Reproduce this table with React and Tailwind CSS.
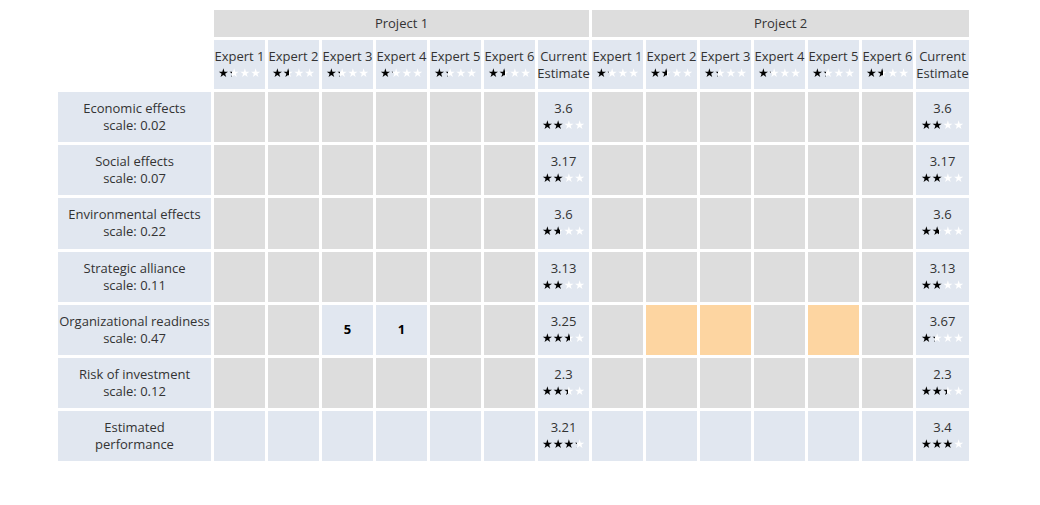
import React from 'react';

const experts = ['Expert 1', 'Expert 2', 'Expert 3', 'Expert 4', 'Expert 5', 'Expert 6'];

// header star ratings per expert
const headerStars = [
  [1.3, 1.6, 1.3, 1.2, 1.3, 1.6],
  [1.2, 1.6, 1.3, 1.2, 1.3, 1.6],
];

// g = gray, b = blue, o = orange
const rows = [
  { label: 'Economic effects', scale: '0.02', p1: ['g','g','g','g','g','g'], p2: ['g','g','g','g','g','g'], est: [['3.6', 2.0], ['3.6', 1.95]] },
  { label: 'Social effects', scale: '0.07', p1: ['g','g','g','g','g','g'], p2: ['g','g','g','g','g','g'], est: [['3.17', 2.0], ['3.17', 2.0]] },
  { label: 'Environmental effects', scale: '0.22', p1: ['g','g','g','g','g','g'], p2: ['g','g','g','g','g','g'], est: [['3.6', 1.7], ['3.6', 1.7]] },
  { label: 'Strategic alliance', scale: '0.11', p1: ['g','g','g','g','g','g'], p2: ['g','g','g','g','g','g'], est: [['3.13', 2.0], ['3.13', 2.0]] },
  { label: 'Organizational readiness', scale: '0.47', p1: ['g','g','b','b','g','g'], p2: ['g','o','o','g','o','g'], vals: { 2: '5', 3: '1' }, est: [['3.25', 2.6], ['3.67', 1.3]] },
  { label: 'Risk of investment', scale: '0.12', p1: ['g','g','g','g','g','g'], p2: ['g','g','g','g','g','g'], est: [['2.3', 2.4], ['2.3', 2.4]] },
  { label: 'Estimated performance', p1: ['b','b','b','b','b','b'], p2: ['b','b','b','b','b','b'], est: [['3.21', 3.25], ['3.4', 3.0]] },
];

const bg = {
  g: 'bg-[#dddddd]',
  b: 'bg-[#e1e7f0]',
  o: 'bg-[#fdd5a1]',
};

// partial fill done with a gradient clipped to the glyphs
const Stars = ({ value }) => {
  const pct = (value / 4) * 100;
  return (
    <span
      className="inline-block whitespace-nowrap text-[12px] leading-[17px] font-['DejaVu_Sans',sans-serif] bg-clip-text text-transparent"
      style={{ backgroundImage: `linear-gradient(to right, #000 ${pct}%, #fff ${pct}%)` }}
    >
      ★★★★
    </span>
  );
};

const EstimateCell = ({ value, stars }) => (
  <div className="bg-[#e1e7f0] flex flex-col items-center justify-center leading-[17px]">
    <span>{value}</span>
    <Stars value={stars} />
  </div>
);

const App = () => {
  return (
    <div className="w-[1040px] h-[505px] bg-white font-['Open_Sans',sans-serif] text-[13px] text-[#333333] pt-[10px] pl-[58px]">
      <div className="grid grid-cols-[153px_repeat(6,51px)_51px_repeat(6,51px)_53px] grid-rows-[27px_49px_repeat(7,50.2px)] gap-[3px]">
        {/* top header row */}
        <div />
        <div className="col-span-7 bg-[#dddddd] flex items-center justify-center">Project 1</div>
        <div className="col-span-7 bg-[#dddddd] flex items-center justify-center">Project 2</div>

        {/* expert header row */}
        <div />
        {[0, 1].map((p) => (
          <React.Fragment key={p}>
            {experts.map((e, i) => (
              <div key={e} className="bg-[#e1e7f0] flex flex-col items-center justify-center leading-[17px] whitespace-nowrap">
                <span>{e}</span>
                <Stars value={headerStars[p][i]} />
              </div>
            ))}
            <div className="bg-[#e1e7f0] flex flex-col items-center justify-center leading-[17px] whitespace-nowrap">
              <span>Current</span>
              <span>Estimate</span>
            </div>
          </React.Fragment>
        ))}

        {/* criteria rows */}
        {rows.map((r) => (
          <React.Fragment key={r.label}>
            <div className="bg-[#e1e7f0] flex flex-col items-center justify-center leading-[17px] text-center whitespace-nowrap">
              {r.scale ? (
                <>
                  <span>{r.label}</span>
                  <span>scale: {r.scale}</span>
                </>
              ) : (
                <>
                  <span>Estimated</span>
                  <span>performance</span>
                </>
              )}
            </div>
            {r.p1.map((c, i) => (
              <div key={'a' + i} className={`${bg[c]} flex items-center justify-center font-bold text-black`}>
                {r.vals && r.vals[i]}
              </div>
            ))}
            <EstimateCell value={r.est[0][0]} stars={r.est[0][1]} />
            {r.p2.map((c, i) => (
              <div key={'b' + i} className={bg[c]} />
            ))}
            <EstimateCell value={r.est[1][0]} stars={r.est[1][1]} />
          </React.Fragment>
        ))}
      </div>
    </div>
  );
};

export default App;
